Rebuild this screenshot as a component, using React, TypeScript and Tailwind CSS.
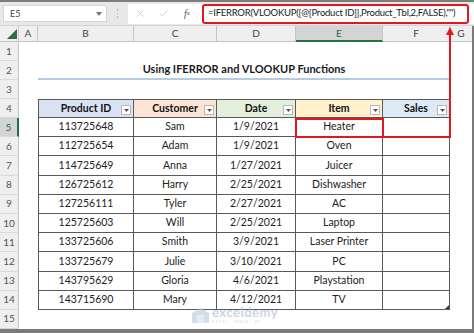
import { Check, X } from 'lucide-react';

interface Order {
  id: string;
  customer: string;
  date: string;
  item: string;
}

const orders: Order[] = [
  { id: '113725648', customer: 'Sam', date: '1/9/2021', item: 'Heater' },
  { id: '112725654', customer: 'Adam', date: '1/9/2021', item: 'Oven' },
  { id: '114725649', customer: 'Anna', date: '1/27/2021', item: 'Juicer' },
  { id: '126725612', customer: 'Harry', date: '2/25/2021', item: 'Dishwasher' },
  { id: '127256111', customer: 'Tyler', date: '2/27/2021', item: 'AC' },
  { id: '125725603', customer: 'Will', date: '2/25/2021', item: 'Laptop' },
  { id: '133725606', customer: 'Smith', date: '3/9/2021', item: 'Laser Printer' },
  { id: '133725679', customer: 'Julie', date: '3/10/2021', item: 'PC' },
  { id: '143795629', customer: 'Gloria', date: '4/6/2021', item: 'Playstation' },
  { id: '143715690', customer: 'Mary', date: '4/12/2021', item: 'TV' },
];

const headers = [
  { label: 'Product ID', w: 'w-[96px] border-l', bg: 'bg-[#dae3f3]' },
  { label: 'Customer', w: 'w-[83px]', bg: 'bg-[#fbe4d5]' },
  { label: 'Date', w: 'w-[79px]', bg: 'bg-[#e2efda]' },
  { label: 'Item', w: 'w-[87px]', bg: 'bg-[#fff2cc]' },
  { label: 'Sales', w: 'w-[67px]', bg: 'bg-[#ddebf7]' },
];

function SheetRow({ n, h, active, children }: { n: number; h: string; active?: boolean; children?: React.ReactNode }) {
  return (
    <div className={`flex ${h}`}>
      <div
        className={`flex w-[19px] shrink-0 items-center justify-center border-b border-b-[#d9d9d9] text-[10px] ${
          active
            ? 'border-r-2 border-r-[#217346] bg-[#d4d4d4] text-[#1e6b41]'
            : 'border-r border-r-[#c6c6c6] bg-[#efefef] text-[#555]'
        }`}
      >
        {n}
      </div>
      <div className="w-[19px] shrink-0" />
      <div className="flex w-[412px] shrink-0">{children}</div>
      <div className="flex-1" />
    </div>
  );
}

function FilterButton() {
  return (
    <span className="absolute bottom-[2px] right-[2px] flex h-[10px] w-[10px] items-center justify-center border border-[#b8b8b8] bg-white">
      <svg width="5" height="3" viewBox="0 0 5 3">
        <path d="M0 0h5L2.5 3z" fill="#555" />
      </svg>
    </span>
  );
}

export default function App() {
  return (
    <div className="relative h-[333px] w-[474px] overflow-hidden bg-white font-['Lato',sans-serif] text-[#222]">
      {/* formula bar */}
      <div className="flex h-[26px] items-center border-t-2 border-b border-t-[#7d7d7d] border-b-[#d4d4d4] bg-[#e8e8e8]">
        <div className="ml-[3px] flex h-[17px] w-[104px] items-center justify-between border border-[#d6d6d6] bg-white pl-[6px] pr-[4px] text-[9px] text-[#444]">
          <span>E5</span>
          <svg width="6" height="4" viewBox="0 0 6 4">
            <path d="M0 0h6L3 4z" fill="#777" />
          </svg>
        </div>
        <div className="flex w-[21px] flex-col items-center justify-center gap-[2px]">
          <span className="h-[1.5px] w-[1.5px] bg-[#b5b5b5]" />
          <span className="h-[1.5px] w-[1.5px] bg-[#b5b5b5]" />
          <span className="h-[1.5px] w-[1.5px] bg-[#b5b5b5]" />
        </div>
        <div className="flex h-[20px] flex-1 items-center bg-white">
          <span className="flex w-[24px] justify-center text-[#b9b9b9]">
            <X size={11} strokeWidth={1.4} />
          </span>
          <span className="flex w-[23px] justify-center text-[#b9b9b9]">
            <Check size={11} strokeWidth={1.4} />
          </span>
          <span className="flex w-[24px] justify-center font-['Liberation_Serif',serif] text-[10px] italic text-[#555]">
            f<span className="text-[7px] leading-[14px]">x</span>
          </span>
          <div className="ml-[3px] flex h-[20px] w-[267px] items-center overflow-hidden whitespace-nowrap rounded-[3px] border-2 border-[#e0191f] pl-[4px] text-[9.5px] tracking-[-0.25px] text-[#1a1a1a]">
            =IFERROR(VLOOKUP([@[Product ID]],Product_Tbl,2,FALSE),"")
          </div>
        </div>
      </div>

      <div className="flex">
        <div className="w-[472px]">
          {/* column headers */}
          <div className="flex h-[16px] text-[10px] text-[#444]">
            <div className="flex w-[19px] items-end justify-end border-r border-b border-[#c6c6c6] bg-[#efefef] pb-[2px] pr-[1px]">
              <svg width="10" height="10" viewBox="0 0 10 10">
                <path d="M10 0v10H0z" fill="#2f6b3f" />
              </svg>
            </div>
            <div className="flex w-[19px] items-center justify-center border-r border-b border-[#c6c6c6] bg-[#efefef]">A</div>
            <div className="flex w-[96px] items-center justify-center border-r border-b border-[#c6c6c6] bg-[#efefef]">B</div>
            <div className="flex w-[83px] items-center justify-center border-r border-b border-[#c6c6c6] bg-[#efefef]">C</div>
            <div className="flex w-[79px] items-center justify-center border-r border-b border-[#c6c6c6] bg-[#efefef]">D</div>
            <div className="flex w-[87px] items-center justify-center border-r border-r-[#c6c6c6] border-b-2 border-b-[#217346] bg-[#d4d4d4] text-[#1e6b41]">E</div>
            <div className="flex w-[67px] items-center justify-center border-r border-b border-[#c6c6c6] bg-[#efefef]">F</div>
            <div className="flex flex-1 items-center justify-center border-b border-[#c6c6c6] bg-[#efefef]">G</div>
          </div>

          <SheetRow n={1} h="h-[19px]" />
          <SheetRow n={2} h="h-[19px]">
            <div className="flex w-full items-center justify-center border-b-2 border-[#b3cbe6] text-[11px] font-bold text-[#1a1a1a]">
              Using IFERROR and VLOOKUP Functions
            </div>
          </SheetRow>
          <SheetRow n={3} h="h-[19px]" />
          <SheetRow n={4} h="h-[19px]">
            {headers.map((hd) => (
              <div
                key={hd.label}
                className={`relative flex items-center justify-center border-t border-r border-b border-[#595959] text-[10.5px] font-bold text-[#111] ${hd.w} ${hd.bg}`}
              >
                {hd.label}
                <FilterButton />
              </div>
            ))}
          </SheetRow>
          {orders.map((o, i) => (
            <SheetRow key={o.id} n={i + 5} h="h-[19.2px]" active={i === 0}>
              <div className="flex w-full border-b border-[#595959] text-[10.5px]">
                <div className="flex w-[96px] items-center justify-center border-x border-[#595959]">{o.id}</div>
                <div className="flex w-[83px] items-center justify-center border-r border-[#595959]">{o.customer}</div>
                <div className="flex w-[79px] items-center justify-center border-r border-[#595959]">{o.date}</div>
                <div className="flex w-[87px] items-center justify-center border-r border-[#595959]">{o.item}</div>
                <div className="relative w-[67px] border-r border-[#595959]">
                  {i === orders.length - 1 && (
                    <svg className="absolute bottom-0 right-0" width="4" height="4" viewBox="0 0 4 4">
                      <path d="M4 0v4H0z" fill="#1f3a6e" />
                    </svg>
                  )}
                </div>
              </div>
            </SheetRow>
          ))}
          <SheetRow n={15} h="h-[19px]" />
        </div>
        <div className="flex-1 bg-[#7a7a7a]" />
      </div>
      <div className="h-[4px] bg-[#7a7a7a]" />

      {/* watermark */}
      <div className="pointer-events-none absolute left-[192px] top-[307px] flex items-center gap-[3px] opacity-60">
        <svg width="17" height="15" viewBox="0 0 17 15">
          <path d="M8.5 0L17 5v10H0V5z" fill="#b9c7dc" />
          <path d="M5 7h7v8H5z" fill="#d5deec" />
        </svg>
        <div className="flex flex-col gap-[2px]">
          <span className="text-[13px] leading-[11px] font-bold tracking-[0.5px] text-[#a9bbd6]">exceldemy</span>
          <span className="text-[4px] leading-[4px] tracking-[1px] text-[#b9c5d6]">EXCEL · DATA · BI</span>
        </div>
      </div>

      {/* red call-out */}
      <svg className="pointer-events-none absolute left-0 top-0" width="474" height="333" viewBox="0 0 474 333">
        <path d="M450 33V137H383" fill="none" stroke="#e0191f" strokeWidth="2" />
        <path d="M446 35L450 27L454 35z" fill="#e0191f" />
        <rect x="296" y="119" width="87" height="18" fill="none" stroke="#e0191f" strokeWidth="2" />
      </svg>
    </div>
  );
}
